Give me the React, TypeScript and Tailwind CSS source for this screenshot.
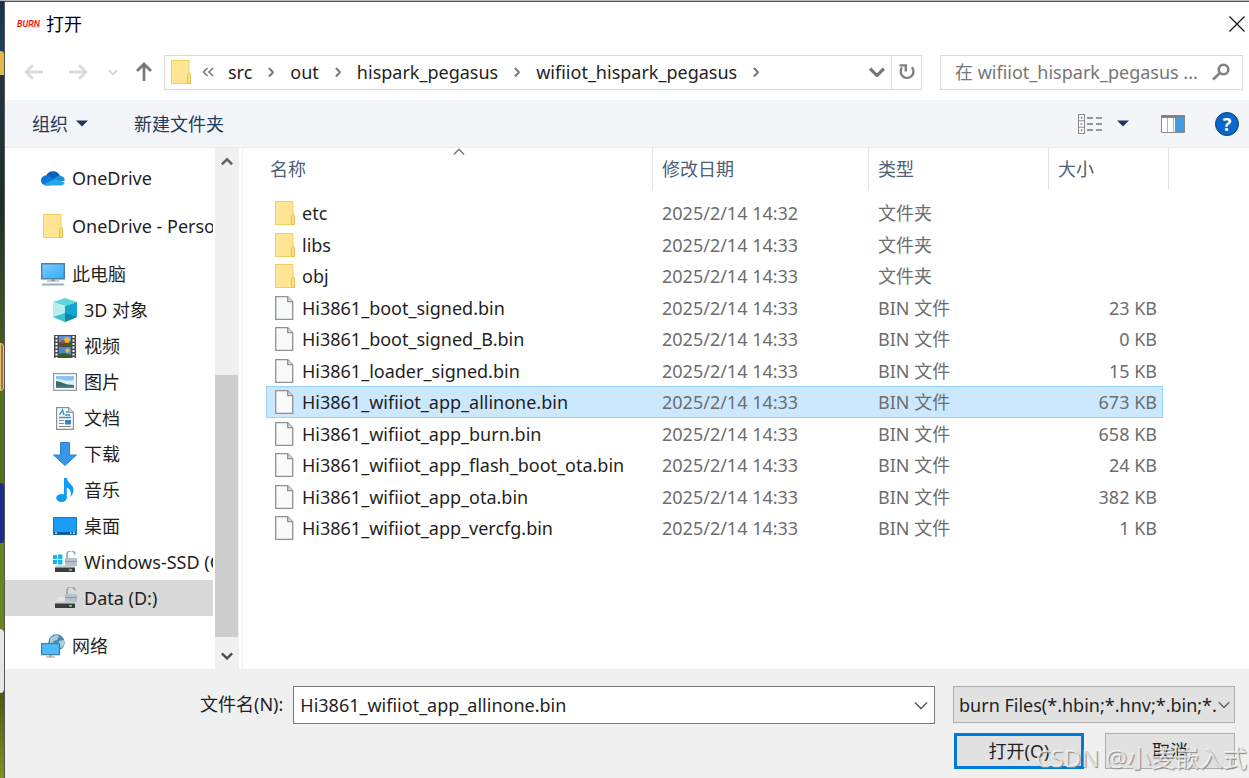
import { useState } from "react";
import type { ReactNode } from "react";
import { clsx } from "clsx";

type FileEntry = {
  name: string;
  date: string;
  type: string;
  size?: string;
  folder?: boolean;
};

const files: FileEntry[] = [
  { name: "etc", date: "2025/2/14 14:32", type: "文件夹", folder: true },
  { name: "libs", date: "2025/2/14 14:33", type: "文件夹", folder: true },
  { name: "obj", date: "2025/2/14 14:33", type: "文件夹", folder: true },
  { name: "Hi3861_boot_signed.bin", date: "2025/2/14 14:33", type: "BIN 文件", size: "23 KB" },
  { name: "Hi3861_boot_signed_B.bin", date: "2025/2/14 14:33", type: "BIN 文件", size: "0 KB" },
  { name: "Hi3861_loader_signed.bin", date: "2025/2/14 14:33", type: "BIN 文件", size: "15 KB" },
  { name: "Hi3861_wifiiot_app_allinone.bin", date: "2025/2/14 14:33", type: "BIN 文件", size: "673 KB" },
  { name: "Hi3861_wifiiot_app_burn.bin", date: "2025/2/14 14:33", type: "BIN 文件", size: "658 KB" },
  { name: "Hi3861_wifiiot_app_flash_boot_ota.bin", date: "2025/2/14 14:33", type: "BIN 文件", size: "24 KB" },
  { name: "Hi3861_wifiiot_app_ota.bin", date: "2025/2/14 14:33", type: "BIN 文件", size: "382 KB" },
  { name: "Hi3861_wifiiot_app_vercfg.bin", date: "2025/2/14 14:33", type: "BIN 文件", size: "1 KB" },
];

export default function App() {
  const [selected, setSelected] = useState("Hi3861_wifiiot_app_allinone.bin");

  return (
    <div className="flex min-h-screen flex-col bg-[#b9b9b9] pt-px font-['Noto_Sans','Noto_Sans_CJK_SC',sans-serif] text-lg text-[#1f1f1f]">
      <div className="flex flex-1">
        <DesktopEdge />
        <div className="flex min-w-0 flex-1 flex-col border-t border-l border-[#555] bg-white">
          <TitleBar />
          <AddressRow />
          <Toolbar />
          <div className="flex h-[521px]">
            <Sidebar />
            <FileList selected={selected} onSelect={setSelected} />
          </div>
          <Footer selected={selected} onChange={setSelected} />
        </div>
      </div>
    </div>
  );
}

// sliver of wallpaper that shows beside the dialog
function DesktopEdge() {
  return (
    <div className="flex w-1 flex-col overflow-hidden bg-[#4a6118]">
      <div className="h-[50px] bg-gradient-to-b from-[#16304a] to-[#1f4258]" />
      <div className="h-6 rounded-tr-full rounded-br bg-[#e3b94b]" />
      <div className="h-[268px] bg-gradient-to-b from-[#22363f] via-[#1d2f28] to-[#4a5a18]" />
      <div className="h-12 rounded-r border border-[#e9c277] bg-[#8f7a3c]" />
      <div className="h-[92px] bg-[#55701b]" />
      <div className="h-[60px] rounded-r bg-[#1c2c8c]" />
      <div className="h-[86px] bg-[#6a8420]" />
      <div className="h-16 rounded-r bg-[#e4e6e8]" />
      <div className="flex-1 bg-gradient-to-b from-[#4c5a14] to-[#7d9420]" />
    </div>
  );
}

function TitleBar() {
  return (
    <header className="flex h-11 items-center pl-3 text-black">
      <span className="mr-1.5 font-['Roboto'] text-[9px] font-semibold text-[#ff1010] italic">
        BURN
      </span>
      <h1>打开</h1>
      <button aria-label="关闭" className="mr-1 ml-auto">
        <svg viewBox="0 0 16 16" className="size-4" fill="none" stroke="#111" strokeWidth="1.2">
          <path d="M0.5 0.5l15 15M15.5 0.5l-15 15" />
        </svg>
      </button>
    </header>
  );
}

function AddressRow() {
  const crumbs = ["src", "out", "hispark_pegasus", "wifiiot_hispark_pegasus"];

  return (
    <div className="flex h-[54px] items-center pr-1.5 pb-0.5">
      <nav className="flex items-center pl-[19px]">
        <button aria-label="后退">
          <NavArrow color="#dadada" className="rotate-180" />
        </button>
        <button aria-label="前进" className="ml-6">
          <NavArrow color="#dadada" />
        </button>
        <button aria-label="最近浏览的位置" className="ml-5">
          <Chevron color="#d8d8d8" className="w-2.5" />
        </button>
        <button aria-label="上移" className="ml-4">
          <NavArrow color="#7a7a7a" className="-rotate-90" />
        </button>
      </nav>
      <div className="ml-2.5 flex h-[35px] min-w-0 flex-1 items-center border border-[#d9d9d9]">
        <FolderIcon className="ml-1.5" />
        <span className="ml-[11px]">
          <DoubleChevron />
        </span>
        <ol className="flex min-w-0 flex-1 items-center">
          {crumbs.map((crumb) => (
            <li key={crumb} className="flex items-center">
              <a href="#" className="px-3.5">
                {crumb}
              </a>
              <Chevron color="#777" className="w-2.5 -rotate-90" />
            </li>
          ))}
        </ol>
        <button aria-label="展开" className="px-1.5">
          <Chevron color="#757575" className="w-4" />
        </button>
        <button
          aria-label="刷新"
          className="flex h-full w-[30px] items-center justify-center border-l border-[#d9d9d9]"
        >
          <svg viewBox="0 0 18 18" className="size-[18px]" fill="none" stroke="#808080" strokeWidth="2.4">
            <path d="M13.8 4.2A6.4 6.4 0 1 1 4 4.6" />
            <path d="M1.5 2.4h6.3v6" />
          </svg>
        </button>
      </div>
      <div className="ml-[18px] flex h-[35px] w-[303px] items-center border border-[#d9d9d9] pr-3 pl-3.5">
        <input
          aria-label="搜索"
          placeholder="在 wifiiot_hispark_pegasus ..."
          className="min-w-0 flex-1 outline-none placeholder:text-[#767676]"
        />
        <svg viewBox="0 0 18 18" className="size-[18px] shrink-0" fill="none" stroke="#808080" strokeWidth="2.6">
          <circle cx="11.5" cy="6.5" r="4.8" />
          <path d="M8 10l-7 6.5" />
        </svg>
      </div>
    </div>
  );
}

function Toolbar() {
  return (
    <div className="flex h-12 items-center border-b border-[#e9eaec] bg-[#f4f5f8] pr-2.5 pl-[27px] text-[#1e395b]">
      <button className="flex items-center gap-2">
        组织
        <Caret />
      </button>
      <button className="ml-[46px]">新建文件夹</button>
      <div className="ml-auto flex items-center">
        <button aria-label="更改视图" className="flex items-center">
          <ViewIcon />
          <span className="ml-3.5">
            <Caret />
          </span>
        </button>
        <button aria-label="预览窗格" className="ml-8">
          <PreviewPaneIcon />
        </button>
        <button
          aria-label="帮助"
          className="ml-[30px] flex size-6 items-center justify-center rounded-full border border-[#0d3f78] bg-[#0a66c8] text-lg leading-none font-bold text-white"
        >
          ?
        </button>
      </div>
    </div>
  );
}

type SidebarItemProps = {
  label: string;
  icon: ReactNode;
  nested?: boolean;
  active?: boolean;
};

function Sidebar() {
  return (
    <aside className="flex w-[237px] shrink-0">
      <nav className="flex w-[208px] flex-col pt-3">
        <SidebarItem label="OneDrive" icon={<CloudIcon />} />
        <div className="h-3" />
        <SidebarItem label="OneDrive - Personal" icon={<FolderIcon />} />
        <div className="h-3" />
        <SidebarItem label="此电脑" icon={<ComputerIcon />} />
        <SidebarItem nested label="3D 对象" icon={<CubeIcon />} />
        <SidebarItem nested label="视频" icon={<VideoIcon />} />
        <SidebarItem nested label="图片" icon={<PictureIcon />} />
        <SidebarItem nested label="文档" icon={<DocumentIcon />} />
        <SidebarItem nested label="下载" icon={<DownloadIcon />} />
        <SidebarItem nested label="音乐" icon={<MusicIcon />} />
        <SidebarItem nested label="桌面" icon={<DesktopIcon />} />
        <SidebarItem nested label="Windows-SSD (C:)" icon={<DriveIcon windows />} />
        <SidebarItem nested active label="Data (D:)" icon={<DriveIcon />} />
        <div className="h-3" />
        <SidebarItem label="网络" icon={<NetworkIcon />} />
      </nav>
      <div className="ml-0.5 flex w-6 flex-col bg-[#f0f0f0]">
        <button aria-label="向上滚动" className="flex h-7 items-center justify-center">
          <Chevron color="#606060" className="w-3 rotate-180" />
        </button>
        <div className="flex-1" />
        <div className="h-[262px] w-[23px] bg-[#cdcdcd]" />
        <button aria-label="向下滚动" className="flex h-8 items-center justify-center pt-1.5">
          <Chevron color="#505050" className="w-3" />
        </button>
      </div>
    </aside>
  );
}

function SidebarItem({ label, icon, nested, active }: SidebarItemProps) {
  return (
    <a
      href="#"
      className={clsx(
        "flex h-9 shrink-0 items-center gap-[7px] overflow-hidden whitespace-nowrap",
        nested ? "pl-12" : "pl-9",
        active && "bg-[#d9d9d9]",
      )}
    >
      <span className="flex w-6 shrink-0 justify-center">{icon}</span>
      {label}
    </a>
  );
}

type FileListProps = {
  selected: string;
  onSelect: (name: string) => void;
};

function FileList({ selected, onSelect }: FileListProps) {
  return (
    <main className="min-w-0 flex-1 border-l border-[#f2f2f2] pr-20 pl-[23px]">
      <table className="w-full table-fixed border-separate border-spacing-0">
        <colgroup>
          <col />
          <col className="w-[216px]" />
          <col className="w-[180px]" />
          <col className="w-[115px]" />
          <col className="w-1.5" />
        </colgroup>
        <thead>
          <tr className="h-[42px] text-left text-[#4c607a]">
            <th className="relative pl-1 font-normal">
              名称
              <span className="absolute top-0 left-1/2 flex -translate-x-1/2">
                <Chevron color="#777" thin className="w-3 rotate-180" />
              </span>
            </th>
            <th className="border-l border-[#e3e3e3] pl-[9px] font-normal">修改日期</th>
            <th className="border-l border-[#e3e3e3] pl-[9px] font-normal">类型</th>
            <th colSpan={2} className="border-x border-[#e3e3e3] pl-[9px] font-normal">
              大小
            </th>
          </tr>
        </thead>
        <tbody className="before:block before:h-[7px]">
          {files.map((file) => (
            <tr
              key={file.name}
              onClick={() => onSelect(file.name)}
              className={clsx(
                "h-8 whitespace-nowrap text-[#6d6d6d] *:border-y *:first:border-l *:last:border-r even:h-[31px]",
                file.name === selected
                  ? "*:border-[#99d1ff] *:bg-[#cce8ff]"
                  : "*:border-transparent",
              )}
            >
              <td className="p-0 pl-2">
                <div className="flex items-center gap-[7px] text-[#1f1f1f]">
                  {file.folder ? <FolderIcon /> : <FileIcon />}
                  {file.name}
                </div>
              </td>
              <td className="p-0 pl-2.5">{file.date}</td>
              <td className="p-0 pl-2.5">{file.type}</td>
              <td className="p-0 pr-[5px] text-right">{file.size}</td>
            </tr>
          ))}
        </tbody>
      </table>
    </main>
  );
}

type FooterProps = {
  selected: string;
  onChange: (name: string) => void;
};

function Footer({ selected, onChange }: FooterProps) {
  return (
    <footer className="relative flex-1 bg-[#f0f0f0] pt-[17px] pr-3.5 pl-[195px]">
      <div className="flex">
        <label htmlFor="filename" className="mr-2.5 leading-9">
          文件名(N):
        </label>
        <div className="flex h-[38px] min-w-0 flex-1 items-center border border-[#7a7a7a] bg-white">
          <input
            id="filename"
            value={selected}
            onChange={(e) => onChange(e.target.value)}
            className="min-w-0 flex-1 pl-1.5 outline-none"
          />
          <button aria-label="文件名历史" className="px-1.5">
            <Chevron color="#606060" thin className="w-3.5" />
          </button>
        </div>
        <div className="relative ml-[18px] h-[37px] w-[282px] border border-[#adadad] bg-[#e1e1e1]">
          <select aria-label="文件类型" className="size-full appearance-none pl-[5px] outline-none">
            <option>burn Files(*.hbin;*.hnv;*.bin;*.</option>
          </select>
          <span className="pointer-events-none absolute top-3.5 right-1 flex">
            <Chevron color="#606060" thin className="w-3" />
          </span>
        </div>
      </div>
      <div className="mt-[9px] flex justify-end gap-[21px]">
        <button className="h-9 w-[130px] border-3 border-[#0078d7] bg-[#e1e1e1]">打开(O)</button>
        <button className="h-9 w-[130px] border border-[#adadad] bg-[#e1e1e1]">取消</button>
      </div>
      <div className="pointer-events-none absolute right-0.5 bottom-1 font-['Open_Sans','Noto_Sans_CJK_SC',sans-serif] text-2xl whitespace-nowrap text-white/70 [text-shadow:1px_1px_1px_#888]">
        CSDN @小麦嵌入式
      </div>
    </footer>
  );
}

type ChevronProps = {
  color: string;
  className?: string;
  thin?: boolean;
};

function Chevron({ color, className, thin }: ChevronProps) {
  return (
    <svg viewBox="0 0 14 9" className={className} fill="none" stroke={color} strokeWidth={thin ? 1.6 : 2.8}>
      <path d="M1 1.5l6 6 6-6" />
    </svg>
  );
}

function DoubleChevron() {
  return (
    <svg viewBox="0 0 12 10" className="w-3" fill="none" stroke="#777" strokeWidth="1.5">
      <path d="M5.5 1l-4 4 4 4M11 1L7 5l4 4" />
    </svg>
  );
}

function NavArrow({ color, className }: { color: string; className?: string }) {
  return (
    <svg viewBox="0 0 20 20" className={clsx("size-5", className)} fill="none" stroke={color} strokeWidth="2.8">
      <path d="M1 10h17M11 3l7 7-7 7" />
    </svg>
  );
}

function Caret() {
  return (
    <svg viewBox="0 0 12 7" className="w-3" fill="#1e395b">
      <path d="M0 0.5h12L6 6.5z" />
    </svg>
  );
}

function ViewIcon() {
  return (
    <svg viewBox="0 0 25 20" className="w-[25px]" fill="none" stroke="#8a8a8a">
      <path d="M0.5 0.5h6v19h-6zM0.5 6.8h6M0.5 13.2h6" fill="#fff" />
      <path d="M9 4h6M18 4h6M9 10h6M18 10h6M9 16h6M18 16h6" stroke="#777" strokeWidth="1.4" />
      <path d="M2.7 3.7h1.6" stroke="#3d7a5b" strokeWidth="1.6" />
      <path d="M2.7 10h1.6" stroke="#3e8ef0" strokeWidth="1.6" />
      <path d="M2.7 16.3h1.6" stroke="#e03030" strokeWidth="1.6" />
    </svg>
  );
}

function PreviewPaneIcon() {
  return (
    <svg viewBox="0 0 24 18" className="w-6">
      <path d="M0.5 0.5h23v17H0.5z" fill="#fff" stroke="#85898e" />
      <path d="M0 0h24v3H0z" fill="#7d858c" />
      <path d="M6.5 3v14M12.5 3v14" stroke="#b0b4b8" />
      <path d="M14 3h9v14h-9z" fill="#429ce3" />
    </svg>
  );
}

function FolderIcon({ className }: { className?: string }) {
  return (
    <svg viewBox="0 0 20 24" className={clsx("h-6 w-5 shrink-0", className)}>
      <path d="M0.5 0.5h17.5v23H0.5z" fill="#ffe594" stroke="#f1cf5f" />
      <path d="M16.5 14.5l1-1h1.5l0.5 1v9h-3z" fill="#ffe08a" stroke="#e8bf45" />
    </svg>
  );
}

function FileIcon() {
  return (
    <svg viewBox="0 0 20 24" className="h-6 w-5 shrink-0">
      <path d="M0.7 0.7h12l5 5v17.6h-17z" fill="#f9fafa" stroke="#919191" strokeWidth="1.3" />
      <path d="M12.7 0.7v5h5" fill="#dcdcdc" stroke="#919191" strokeWidth="1.3" />
    </svg>
  );
}

function CloudIcon() {
  return (
    <svg viewBox="0 0 24 16" className="w-6">
      <path d="M5 6a7.5 7.5 0 0 1 14 0v6H5z" fill="#0d5fb8" />
      <path d="M5 15.5a5 5 0 0 1 0-10 7 7 0 0 1 4.500 1l6 4-7 5z" fill="#0f78d4" />
      <path d="M11 10l5-3.500a6 6 0 0 1 3-.8 5 5 0 0 1 4.800 5l-6 1z" fill="#1490df" />
      <path d="M2 14.500L14.500 9l9.200 3.500a4 4 0 0 1-4 3H5a5 5 0 0 1-3-1z" fill="#28a8ea" />
    </svg>
  );
}

function ComputerIcon() {
  return (
    <svg viewBox="0 0 24 23" className="w-6">
      <defs>
        <linearGradient id="screen" x1="0" y1="0" x2="1" y2="1">
          <stop offset="0" stopColor="#82cffd" />
          <stop offset="0.5" stopColor="#55bcff" />
          <stop offset="1" stopColor="#38abf8" />
        </linearGradient>
      </defs>
      <path d="M0.7 0.7h22.6v15H0.7z" fill="url(#screen)" stroke="#4a7fa5" strokeWidth="1.4" />
      <path d="M10 16h4v1.5h4v1H6v-1h4z" fill="#8fa0ac" />
      <path d="M2 20.5h20l2 2H0z" fill="#9aaebd" />
    </svg>
  );
}

function CubeIcon() {
  return (
    <svg viewBox="0 0 24 24" className="w-6">
      <path d="M12 0l12 4-12 4L0 4z" fill="#62d5df" />
      <path d="M0 4l12 4v16L0 19z" fill="#b9eef0" />
      <path d="M24 4L12 8v16l12-5z" fill="#12a5cf" />
      <path d="M0 19l12-4v9z" fill="#38c3cf" />
      <path d="M24 19l-12-4v9z" fill="#0a8aa8" />
    </svg>
  );
}

function VideoIcon() {
  return (
    <svg viewBox="0 0 22 23" className="w-[22px]">
      <path d="M0 0h22v23H0z" fill="#4a4a4a" />
      <path d="M5 1h12v10H5z" fill="#5b93dc" />
      <path d="M5 12h12v10H5z" fill="#4d86d4" />
      <path d="M5 7l3 1 3-3 2 2 4-1v5H5zM5 19l5-1 7 2v2H5z" fill="#365f22" />
      <circle cx="13" cy="5" r="3" fill="#eeb52c" />
      <circle cx="9" cy="7" r="2" fill="#c9364c" />
      <circle cx="13.5" cy="15.5" r="2.2" fill="#e4b93a" />
      <path d="M2.5 1v22M19.5 1v22" stroke="#fff" strokeWidth="2" strokeDasharray="2 1.5" />
    </svg>
  );
}

function PictureIcon() {
  return (
    <svg viewBox="0 0 24 18" className="w-6">
      <path d="M0.6 0.6h22.8v16.8H0.6z" fill="#fff" stroke="#9a9a9a" strokeWidth="1.2" />
      <path d="M3 3h18v12H3z" fill="#8cc4f0" />
      <path d="M3 6c6 0 10 3 18 1v6H3z" fill="#e1f0f5" />
      <path d="M3 8c5 0 8 4 18 4v2H3z" fill="#386f60" />
      <path d="M3 13h18v2H3z" fill="#457ca4" />
    </svg>
  );
}

function DocumentIcon() {
  return (
    <svg viewBox="0 0 18 23" className="w-[18px]">
      <path d="M0.6 0.6h12l4.8 4.8v17H0.6z" fill="#fbfbfb" stroke="#8e8e8e" strokeWidth="1.2" />
      <path d="M12.6 0.6v4.8h4.8" fill="#ddd" stroke="#8e8e8e" />
      <path d="M3.5 8l3-5 1.5 5M10 5h2M9 8h5M3 10.5h12" fill="none" stroke="#2a94dc" strokeWidth="1.4" />
      <path d="M3 13.5h5M3 16.5h5M3 19.5h12" stroke="#8a8a8a" strokeWidth="1.2" />
      <path d="M9 13h6v4.5H9z" fill="#3b83bd" />
    </svg>
  );
}

function DownloadIcon() {
  return (
    <svg viewBox="0 0 24 24" className="w-6">
      <path d="M7.5 0.5h9V13h7L12 23.5 0.5 13h7z" fill="#3996e6" stroke="#2e80cc" />
    </svg>
  );
}

function MusicIcon() {
  return (
    <svg viewBox="0 0 18 24" className="w-[18px]" fill="#0f9cf5">
      <ellipse cx="5.5" cy="20" rx="5.3" ry="4" />
      <path d="M8 0h3c0 5 6.5 6 6.5 12 0 3-1.5 5-3 7 1-5 0-8-3.7-9.5V20H8z" />
    </svg>
  );
}

function DesktopIcon() {
  return (
    <svg viewBox="0 0 24 18" className="w-6">
      <path d="M0.5 0.5h23v17H0.5z" fill="#1b9dfb" stroke="#1978c2" />
      <path d="M1 15h22v2.5H1z" fill="#14588e" />
      <path d="M2 16.2h2M17 16.2h1.5M20 16.2h2" stroke="#fff" strokeWidth="1.2" />
    </svg>
  );
}

function DriveIcon({ windows }: { windows?: boolean }) {
  return (
    <svg viewBox="0 0 24 22" className="w-6">
      {windows ? (
        <path d="M0 4h4v4H0zM5 3.5h4.5V8H5zM0 9h4v4H0zM5 9h4.5v4.5H5z" fill="#18b4f0" />
      ) : (
        <path d="M6 10h8v6H2z" fill="#e2e5e8" />
      )}
      <path d="M14 7V4a4 4 0 0 1 8-.5" fill="none" stroke="#9ba5ad" strokeWidth="1.7" />
      <path d="M12 7h12v8H12z" fill="#b4c2cc" />
      <path d="M12 10.5h12" stroke="#8799a5" />
      <path d="M3 14.5h18l1 2H2z" fill="#c8cccf" />
      <path d="M2 16.5h20V21H2z" fill="#3a3d3f" />
      <path d="M16 18.8h3" stroke="#4be05a" strokeWidth="1.8" />
    </svg>
  );
}

function NetworkIcon() {
  return (
    <svg viewBox="0 0 24 24" className="w-6">
      <circle cx="15.5" cy="8.5" r="8.2" fill="#4a8aad" />
      <path d="M9 5c3-4 7-4.5 9-3l-2 4-4 1 1 3-4-1zM18 7l5-1v5l-3 3-3-3z" fill="#a9cddc" />
      <path d="M0.6 9.6h17.8v11H0.6z" fill="#4fbcff" stroke="#3e7fae" strokeWidth="1.2" />
      <path d="M8 21h3v1.5h3v1H5v-1h3z" fill="#98a8b4" />
    </svg>
  );
}
